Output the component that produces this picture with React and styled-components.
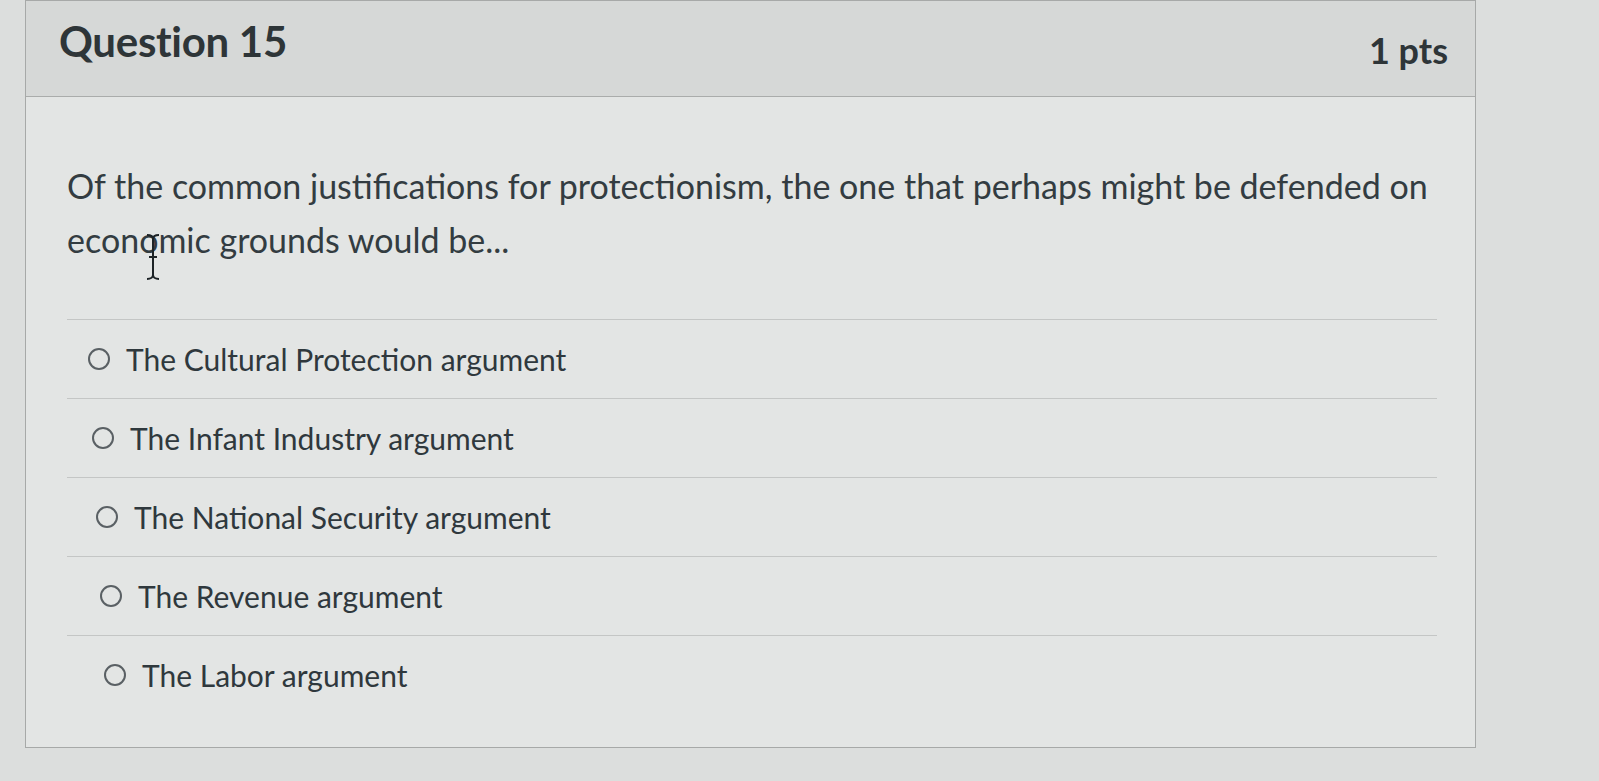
import React from 'react'
import styled, { createGlobalStyle } from 'styled-components'

const GlobalStyle = createGlobalStyle`
    html, body {
        margin: 0;
        padding: 0;
        background: #dcdedd;
        font-family: Lato, "Liberation Sans", sans-serif;
        color: #2f3a40;
    }
`

const Page = styled.div`
    width: 1599px;
    height: 781px;
    overflow: hidden;
    padding-left: 25px;
    box-sizing: border-box;
`

const Card = styled.div`
    width: 1451px;
    height: 748px;
    box-sizing: border-box;
    border: 1px solid #a7a9a8;
    background: #e3e5e4;
`

const Header = styled.div`
    height: 96px;
    box-sizing: border-box;
    background: #d6d8d7;
    border-bottom: 1px solid #aaacab;
    display: flex;
    justify-content: space-between;
    align-items: flex-start;
    padding: 0 27px 0 33px;
`

const Title = styled.h2`
    margin: 0;
    padding-top: 15px;
    font-size: 42px;
    font-weight: 700;
    color: #2e3538;
    letter-spacing: -0.3px;
`

const Points = styled.div`
    padding-top: 27px;
    font-size: 36px;
    font-weight: 700;
    color: #2e3538;
`

const Body = styled.div`
    padding: 62px 38px 0 41px;
    position: relative;
`

const QuestionText = styled.p`
    margin: 0 0 52px;
    font-size: 34px;
    line-height: 54px;
    color: #333c41;
`

const Answers = styled.ul`
    list-style: none;
    margin: 0;
    padding: 0;
`

const Answer = styled.li`
    height: 78px;
    border-top: 1px solid #c4c6c5;
    display: flex;
    align-items: center;
    gap: 16px;
    padding-left: ${p => 21 + p.$shift}px;
    font-size: 30px;
    color: #2f383d;
`

const Radio = styled.span`
    width: 18px;
    height: 18px;
    border: 2px solid #5a6064;
    border-radius: 50%;
    flex: none;
`

const Cursor = styled.svg`
    position: absolute;
    left: 117px;
    top: 136px;
`

const options = [
    'The Cultural Protection argument',
    'The Infant Industry argument',
    'The National Security argument',
    'The Revenue argument',
    'The Labor argument',
]

export default function App() {
    return (
        <>
            <GlobalStyle />
            <Page>
                <Card>
                    <Header>
                        <Title>Question 15</Title>
                        <Points>1 pts</Points>
                    </Header>
                    <Body>
                        <QuestionText>
                            Of the common justifications for protectionism, the one that perhaps might be defended on economic grounds would be...
                        </QuestionText>
                        <Answers>
                            {options.map((o, i) => (
                                <Answer key={o} $shift={i * 4}>
                                    <Radio />
                                    {o}
                                </Answer>
                            ))}
                        </Answers>
                        {/* text cursor hovering in the photo */}
                        <Cursor width="20" height="48" viewBox="0 0 20 48">
                            <path d="M4 2 C8 2 10 4 10 6 C10 4 12 2 16 2 M10 6 V42 M4 46 C8 46 10 44 10 42 C10 44 12 46 16 46 M6 24 H14" stroke="#1d2326" strokeWidth="2" fill="none" />
                        </Cursor>
                    </Body>
                </Card>
            </Page>
        </>
    )
}
